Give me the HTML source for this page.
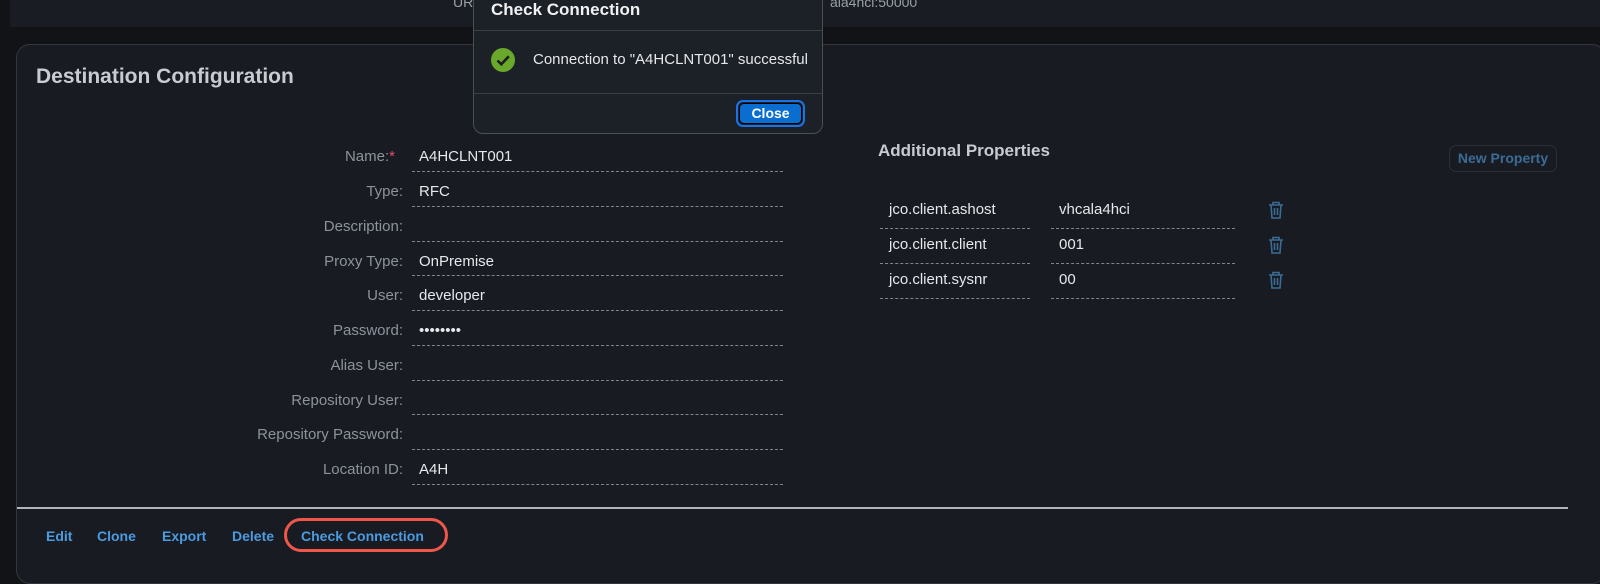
<!DOCTYPE html>
<html><head><style>
*{margin:0;padding:0;box-sizing:border-box}
body{width:1600px;height:566px;background:#121317;font-family:"Liberation Sans",sans-serif;position:relative;overflow:hidden}
.top{position:absolute;left:10px;top:0;width:1590px;height:27px;background:#191c23}
.top span{position:absolute;left:443px;top:-6px;color:#9aa0a8;font-size:14px}
.top span.r{left:820px}
.card{position:absolute;left:16px;top:44px;width:1590px;height:540px;background:#181b22;border:1px solid #34373d;border-radius:14px}
.t{position:absolute;color:#c8cbd0;font-weight:bold}
.lbl{position:absolute;width:250px;text-align:right;color:#8d939b;font-size:15px}
.val{position:absolute;color:#e6e8eb;font-size:15px}
.ul{position:absolute;height:0;border-top:1px dashed #80858c}
.act{position:absolute;top:528px;color:#4a9be0;font-size:14px;font-weight:bold}
.dlg{position:absolute;left:473px;top:-10px;width:350px;height:144px;background:#1c2027;border:1px solid #4a4e55;border-radius:10px}
</style></head><body>
<div class="top"><span>UR</span><span class="r">ala4hci:50000</span></div>
<div class="card"></div>
<div class="t" style="left:36px;top:65px;font-size:21px">Destination Configuration</div>
<div class="t" style="left:878px;top:141px;font-size:17px">Additional Properties</div>
<div style="position:absolute;left:1449px;top:145px;width:108px;height:27px;border:1px solid #2a3038;border-radius:7px;color:#3b6c95;font-size:14px;text-align:center;line-height:25px;font-weight:bold">New Property</div>

<div class="lbl" style="left:145px;top:148px">Name:<span style="color:#e0506a">*</span></div>
<div class="lbl" style="left:153px;top:183px">Type:</div>
<div class="lbl" style="left:153px;top:218px">Description:</div>
<div class="lbl" style="left:153px;top:253px">Proxy Type:</div>
<div class="lbl" style="left:153px;top:287px">User:</div>
<div class="lbl" style="left:153px;top:322px">Password:</div>
<div class="lbl" style="left:153px;top:357px">Alias User:</div>
<div class="lbl" style="left:153px;top:392px">Repository User:</div>
<div class="lbl" style="left:153px;top:426px">Repository Password:</div>
<div class="lbl" style="left:153px;top:461px">Location ID:</div>
<div class="val" style="left:419px;top:148px">A4HCLNT001</div>
<div class="val" style="left:419px;top:183px">RFC</div>
<div class="val" style="left:419px;top:253px">OnPremise</div>
<div class="val" style="left:419px;top:287px">developer</div>
<div class="val" style="left:419px;top:322px">••••••••</div>
<div class="val" style="left:419px;top:461px">A4H</div>
<div class="ul" style="left:412px;width:371px;top:171px"></div>
<div class="ul" style="left:412px;width:371px;top:206px"></div>
<div class="ul" style="left:412px;width:371px;top:241px"></div>
<div class="ul" style="left:412px;width:371px;top:275px"></div>
<div class="ul" style="left:412px;width:371px;top:310px"></div>
<div class="ul" style="left:412px;width:371px;top:345px"></div>
<div class="ul" style="left:412px;width:371px;top:380px"></div>
<div class="ul" style="left:412px;width:371px;top:414px"></div>
<div class="ul" style="left:412px;width:371px;top:449px"></div>
<div class="ul" style="left:412px;width:371px;top:484px"></div>

<div class="val" style="left:889px;top:201px">jco.client.ashost</div>
<div class="val" style="left:1059px;top:201px">vhcala4hci</div>
<div class="val" style="left:889px;top:236px">jco.client.client</div>
<div class="val" style="left:1059px;top:236px">001</div>
<div class="val" style="left:889px;top:271px">jco.client.sysnr</div>
<div class="val" style="left:1059px;top:271px">00</div>
<div class="ul" style="left:880px;width:150px;top:228px"></div>
<div class="ul" style="left:1051px;width:184px;top:228px"></div>
<div class="ul" style="left:880px;width:150px;top:263px"></div>
<div class="ul" style="left:1051px;width:184px;top:263px"></div>
<div class="ul" style="left:880px;width:150px;top:298px"></div>
<div class="ul" style="left:1051px;width:184px;top:298px"></div>
<svg style="position:absolute;left:1268px;top:201px" width="16" height="18" viewBox="0 0 16 18" fill="none" stroke="#3b6c95" stroke-width="1.6"><path d="M1 4h14M5 4V1.5h6V4M3 4l1 13h8l1-13M6.5 7v7M9.5 7v7"/></svg>
<svg style="position:absolute;left:1268px;top:236px" width="16" height="18" viewBox="0 0 16 18" fill="none" stroke="#3b6c95" stroke-width="1.6"><path d="M1 4h14M5 4V1.5h6V4M3 4l1 13h8l1-13M6.5 7v7M9.5 7v7"/></svg>
<svg style="position:absolute;left:1268px;top:271px" width="16" height="18" viewBox="0 0 16 18" fill="none" stroke="#3b6c95" stroke-width="1.6"><path d="M1 4h14M5 4V1.5h6V4M3 4l1 13h8l1-13M6.5 7v7M9.5 7v7"/></svg>

<div style="position:absolute;left:17px;top:507px;width:1551px;height:2px;background:#b0b3b8"></div>
<div class="act" style="left:46px">Edit</div>
<div class="act" style="left:97px">Clone</div>
<div class="act" style="left:162px">Export</div>
<div class="act" style="left:232px">Delete</div>
<div class="act" style="left:301px">Check Connection</div>
<div style="position:absolute;left:284px;top:518px;width:164px;height:34px;border:3px solid #f0574a;border-radius:17px"></div>

<div class="dlg"></div>
<div class="t" style="left:491px;top:0px;font-size:17px;color:#f0f1f3">Check Connection</div>
<div style="position:absolute;left:474px;top:30px;width:348px;height:1px;background:#3a3e45"></div>
<svg style="position:absolute;left:491px;top:48px" width="24" height="24" viewBox="0 0 24 24"><circle cx="12" cy="12" r="12" fill="#6aa82c"/><path d="M6.5 12.5l3.8 3.8 7.5-8" fill="none" stroke="#1b1e24" stroke-width="2.6"/></svg>
<div class="val" style="left:533px;top:51px;font-size:15px">Connection to "A4HCLNT001" successful</div>
<div style="position:absolute;left:474px;top:93px;width:348px;height:1px;background:#3a3e45"></div>
<div style="position:absolute;left:736px;top:100px;width:69px;height:27px;border:2px solid #1a73e8;border-radius:7px;padding:1px"><div style="width:100%;height:100%;background:#0a6ed1;border:1px solid #000;border-radius:5px;color:#fff;font-weight:bold;font-size:14px;text-align:center;line-height:19px">Close</div></div>
</body></html>
